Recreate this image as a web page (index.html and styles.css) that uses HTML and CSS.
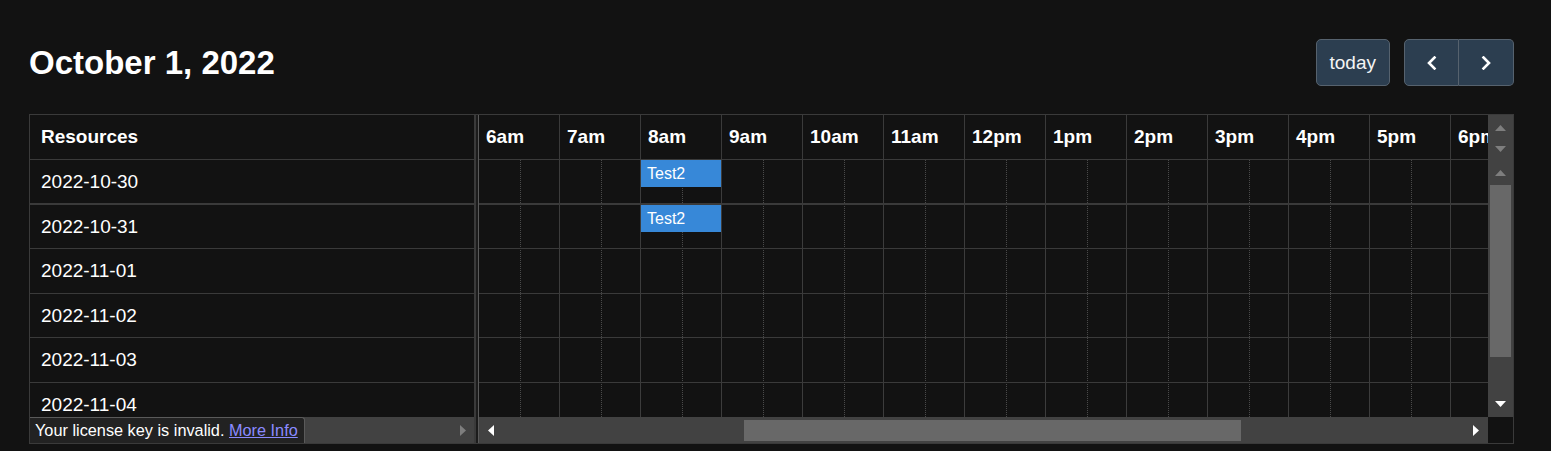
FILE: index.html
```html
<!DOCTYPE html>
<html lang="en">
<head>
    <meta charset="UTF-8" />
    <meta name="viewport" content="width=device-width, initial-scale=1.0"/>
    <title>Resource Timeline</title>
    <link rel="stylesheet" href="styles.css">
</head>
<body>
<div class="calendar">
    <div class="toolbar">
        <h2 class="title">October 1, 2022</h2>
        <div class="actions">
            <button class="btn" type="button">today</button>
            <div class="btn-group">
                <button class="btn btn-icon" type="button" aria-label="prev">
                    <svg width="12" height="14" viewBox="0 0 12 14"><polyline points="8.5,1.5 3,7 8.5,12.5" /></svg>
                </button>
                <button class="btn btn-icon" type="button" aria-label="next">
                    <svg width="12" height="14" viewBox="0 0 12 14"><polyline points="3.5,1.5 9,7 3.5,12.5" /></svg>
                </button>
            </div>
        </div>
    </div>

    <div class="timeline">
        <div class="res-head">Resources</div>
        <div class="divider"></div>
        <div class="tl-head">
            <div class="slot-label">6am</div>
            <div class="slot-label">7am</div>
            <div class="slot-label">8am</div>
            <div class="slot-label">9am</div>
            <div class="slot-label">10am</div>
            <div class="slot-label">11am</div>
            <div class="slot-label">12pm</div>
            <div class="slot-label">1pm</div>
            <div class="slot-label">2pm</div>
            <div class="slot-label">3pm</div>
            <div class="slot-label">4pm</div>
            <div class="slot-label">5pm</div>
            <div class="slot-label">6pm</div>
        </div>
        <div class="vscroll vscroll-head">
            <svg class="arrow off" width="11" height="6" viewBox="0 0 11 6"><polygon points="0,6 5.5,0 11,6" /></svg>
            <svg class="arrow off" width="11" height="6" viewBox="0 0 11 6"><polygon points="0,0 5.5,6 11,0" /></svg>
        </div>

        <div class="res-body">
            <div class="res-row">2022-10-30</div>
            <div class="res-row">2022-10-31</div>
            <div class="res-row">2022-11-01</div>
            <div class="res-row">2022-11-02</div>
            <div class="res-row">2022-11-03</div>
            <div class="res-row">2022-11-04</div>
        </div>
        <div class="tl-body">
            <div class="slats">
                <div class="slat"></div><div class="slat"></div><div class="slat"></div>
                <div class="slat"></div><div class="slat"></div><div class="slat"></div>
                <div class="slat"></div><div class="slat"></div><div class="slat"></div>
                <div class="slat"></div><div class="slat"></div><div class="slat"></div>
                <div class="slat"></div>
            </div>
            <div class="tl-rows">
                <div class="tl-row"><div class="event" style="margin-left:162px;width:80px">Test2</div></div>
                <div class="tl-row"><div class="event" style="margin-left:162px;width:80px">Test2</div></div>
                <div class="tl-row"></div>
                <div class="tl-row"></div>
                <div class="tl-row"></div>
                <div class="tl-row"></div>
            </div>
        </div>
        <div class="vscroll vscroll-body">
            <svg class="arrow off" width="11" height="6" viewBox="0 0 11 6"><polygon points="0,6 5.5,0 11,6" /></svg>
            <div class="thumb-v" style="height:172px"></div>
            <svg class="arrow down" width="11" height="6" viewBox="0 0 11 6"><polygon points="0,0 5.5,6 11,0" /></svg>
        </div>

        <div class="hscroll res-hscroll">
            <div class="license">Your license key is invalid.&nbsp;<a href="#">More Info</a></div>
            <svg class="arrow off right" width="6" height="11" viewBox="0 0 6 11"><polygon points="0,0 6,5.5 0,11" /></svg>
        </div>
        <div class="hscroll tl-hscroll">
            <svg class="arrow" width="6" height="11" viewBox="0 0 6 11"><polygon points="6,0 0,5.5 6,11" /></svg>
            <div class="thumb-h" style="margin-left:250px;width:497px"></div>
            <svg class="arrow right" width="6" height="11" viewBox="0 0 6 11"><polygon points="0,0 6,5.5 0,11" /></svg>
        </div>
        <div class="corner"></div>
    </div>
</div>
</body>
</html>
```

FILE: styles.css
```css
* {
  box-sizing: border-box;
}

body {
  margin: 0;
  background-color: #121212;
  color: #fff;
  font-family: 'Liberation Sans', Arial, sans-serif;
  font-size: 19px;
}

.calendar {
  margin: 39px 37px 0 29px;
}

/* toolbar */
.toolbar {
  display: flex;
  justify-content: space-between;
  align-items: center;
  height: 47px;
  margin-bottom: 28px;
}

.title {
  margin: 0;
  font-size: 33px;
  font-weight: bold;
}

.actions {
  display: flex;
  gap: 14px;
}

.btn {
  height: 47px;
  padding: 0 13px;
  display: flex;
  align-items: center;
  justify-content: center;
  background-color: #2c3e50;
  border: 1px solid #56626e;
  border-radius: 5px;
  color: #f4f4f4;
  font-family: inherit;
  font-size: 19px;
}

.btn-group {
  display: flex;
}

.btn-icon {
  width: 55px;
  padding: 0;
}

.btn-icon:first-child {
  border-top-right-radius: 0;
  border-bottom-right-radius: 0;
}

.btn-icon + .btn-icon {
  border-left: none;
  border-top-left-radius: 0;
  border-bottom-left-radius: 0;
}

.btn-icon svg polyline {
  fill: none;
  stroke: #fff;
  stroke-width: 2.6;
  stroke-linecap: square;
}

/* timeline grid */
.timeline {
  display: grid;
  grid-template-columns: 444px 5px 1009px 25px;
  grid-template-rows: 45px 257px 26px;
  border: 1px solid #3a3a3a;
}

.res-head {
  grid-column: 1;
  grid-row: 1;
  display: flex;
  align-items: center;
  padding-left: 11px;
  font-weight: bold;
  border-bottom: 1px solid #3a3a3a;
}

.divider {
  grid-column: 2;
  grid-row: 1 / 4;
  border-left: 2px solid #3a3a3a;
  border-right: 1px solid #5a5a5a;
  background-color: #1c1c1c;
}

.tl-head {
  grid-column: 3;
  grid-row: 1;
  display: flex;
  overflow: hidden;
  border-bottom: 1px solid #3a3a3a;
}

.slot-label {
  flex: 0 0 81px;
  display: flex;
  align-items: center;
  padding-left: 7px;
  font-weight: bold;
  white-space: nowrap;
  border-right: 1px solid #3a3a3a;
}

.res-body {
  grid-column: 1;
  grid-row: 2;
  overflow: hidden;
}

.res-row {
  height: 45px;
  display: flex;
  align-items: center;
  padding-left: 11px;
  border-bottom: 1px solid #3a3a3a;
}

.res-row:first-child,
.tl-row:first-child {
  border-bottom-width: 2px;
}

.res-row:nth-child(even),
.tl-row:nth-child(even) {
  height: 44px;
}

.tl-body {
  grid-column: 3;
  grid-row: 2;
  display: grid;
  overflow: hidden;
}

.slats,
.tl-rows {
  grid-area: 1 / 1;
}

.slats {
  display: flex;
}

.slat {
  flex: 0 0 81px;
  border-right: 1px solid #3c3c3c;
  background-image: repeating-linear-gradient(to bottom, #4a4a4a 0 1px, transparent 1px 2px);
  background-size: 1px 100%;
  background-position: 41px 0;
  background-repeat: no-repeat;
}

.tl-row {
  height: 45px;
  border-bottom: 1px solid #3a3a3a;
}

.event {
  height: 27px;
  line-height: 27px;
  padding-left: 6px;
  background-color: #3788d8;
  color: #fff;
  font-size: 16px;
}

/* fake scrollbars */
.vscroll {
  grid-column: 4;
  display: flex;
  flex-direction: column;
  align-items: center;
  background-color: #424242;
}

.vscroll-head {
  grid-row: 1;
  padding-top: 10px;
  gap: 15px;
}

.vscroll-body {
  grid-row: 2;
  padding: 10px 0;
}

.thumb-v {
  width: 21px;
  margin-top: 9px;
  background-color: #686868;
}

.arrow {
  flex: none;
  fill: #fff;
}

.arrow.off {
  fill: #7e7e7e;
}

.arrow.down {
  margin-top: auto;
}

.hscroll {
  grid-row: 3;
  display: flex;
  align-items: center;
  background-color: #424242;
}

.res-hscroll {
  grid-column: 1;
  align-items: stretch;
}

.res-hscroll .arrow {
  align-self: center;
  margin: 0 8px 0 auto;
}

.license {
  display: flex;
  align-items: center;
  padding: 0 6px 0 5px;
  background-color: #222;
  border-top: 1px solid #5a5a5a;
  border-right: 1px solid #5a5a5a;
  border-top-right-radius: 3px;
  font-size: 16.3px;
  white-space: nowrap;
}

.license a {
  color: #8a8aff;
}

.tl-hscroll {
  grid-column: 3;
  padding: 0 9px;
}

.thumb-h {
  height: 21px;
  background-color: #686868;
}

.tl-hscroll .arrow.right {
  margin-left: auto;
}

.corner {
  grid-column: 4;
  grid-row: 3;
}
```
